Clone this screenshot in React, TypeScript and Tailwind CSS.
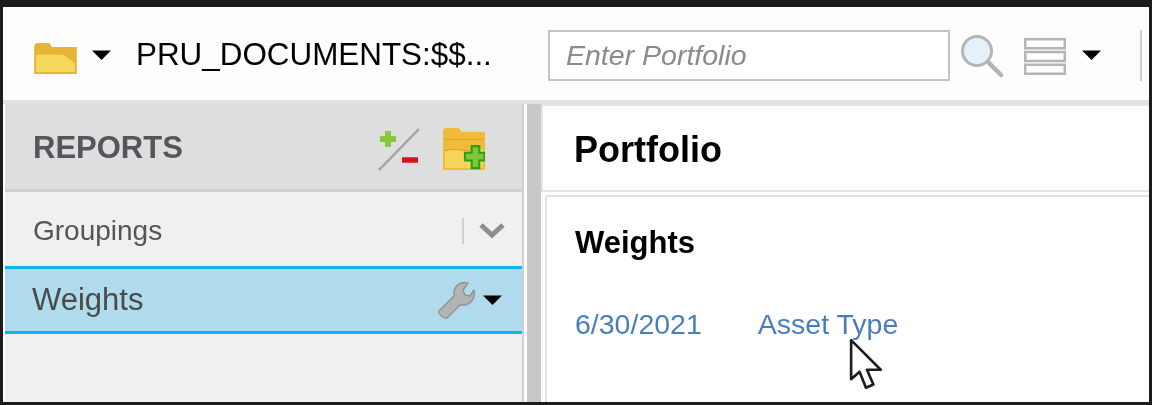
const Caret = ({ className = "" }: { className?: string }) => (
  <svg className={className} width="19" height="10" viewBox="0 0 19 10">
    <path d="M0 0.5H19L9.5 10Z" fill="#000" />
  </svg>
);

const Folder = () => (
  <svg width="43" height="31" viewBox="0 0 44 32">
    <path d="M0 32V4q0-4 4-4h10q3 0 4 4h26v28Z" fill="#e6b535" />
    <path d="M2 12h26q3 0 5 2l9 7v9H2Z" fill="#f5d95c" />
  </svg>
);

const PlusMinus = () => (
  <svg width="44" height="46" viewBox="0 0 44 46">
    <path d="M2 44L42 3" stroke="#a3a3a3" strokeWidth="2.5" />
    <path d="M3 13h16M11 5v16" stroke="#8cc63f" strokeWidth="6" />
    <path d="M25 34h16" stroke="#d9101c" strokeWidth="5.5" />
  </svg>
);

const FolderPlus = () => (
  <svg width="42" height="42" viewBox="0 0 44 44">
    <path d="M0 44V4q0-4 4-4h11q3 0 4 4h25v40Z" fill="#efbb38" />
    <path d="M2 24c10-4 18 0 26 0l14-2v20H2Z" fill="#f7d55a" />
    <path d="M2 12h40M2 24c10-4 18 0 26 0" fill="none" stroke="#dda32c" strokeWidth="1.5" />
    <path d="M30 19v7h-7v8h7v8h8v-8h5.5v-8H38v-7Z" fill="#7cc63c" stroke="#2f9e10" strokeWidth="2.2" />
  </svg>
);

const Search = () => (
  <svg width="44" height="44" viewBox="0 0 44 44">
    <circle cx="17" cy="17" r="14.5" fill="#e4f1f8" stroke="#b5b5b5" strokeWidth="3" />
    <path d="M28 28L41 41" stroke="#b3b3b3" strokeWidth="4.5" strokeLinecap="round" />
  </svg>
);

const ListIcon = () => (
  <svg width="42" height="37" viewBox="0 0 42 37">
    <rect x="1.25" y="1.25" width="39.5" height="9" fill="#fff" stroke="#b5b5b5" strokeWidth="2.5" />
    <rect x="1.25" y="14" width="39.5" height="9" fill="#fff" stroke="#b5b5b5" strokeWidth="2.5" />
    <rect x="1.25" y="26.75" width="39.5" height="9" fill="#fff" stroke="#b5b5b5" strokeWidth="2.5" />
  </svg>
);

const Wrench = () => (
  <svg width="38" height="38" viewBox="0 0 38 38">
    <path
      d="M1 30L16 15C15 6 21 0 30 2L25 9l2 5 5 1 4-6c2 10-5 16-14 15L9 37c-3 1-9-4-8-7Z"
      fill="#b4b4b4"
      stroke="#949494"
      strokeWidth="1.5"
      strokeLinejoin="round"
    />
  </svg>
);

const Chevron = () => (
  <svg width="28" height="18" viewBox="0 0 28 18">
    <path d="M3 3L14 13L25 3" fill="none" stroke="#8e8e8e" strokeWidth="5" />
  </svg>
);

const Cursor = () => (
  <svg className="absolute left-[308px] top-[235px]" width="36" height="53" viewBox="0 0 34 50">
    <path
      d="M2 1V38L10 31L16 46L23 43L17 29H30Z"
      fill="#fff"
      stroke="#1d1d1d"
      strokeWidth="2.5"
      strokeLinejoin="round"
    />
  </svg>
);

export default function App() {
  return (
    <div className="w-[1152px] h-[405px] overflow-hidden bg-[#1c1c1c] pt-[7px] pl-[3px] pr-[3px] pb-[3px] font-['Liberation_Sans',sans-serif]">
      <div className="h-full bg-white flex flex-col blur-[0.4px]">
        <div className="h-[97px] shrink-0 pt-[3px] flex items-center bg-[#fdfdfd] border-b-[4px] border-[#e2e2e2]">
          <div className="ml-[31px] mt-[6px]"><Folder /></div>
          <Caret className="ml-[15px]" />
          <span className="ml-[25px] w-[412px] text-[31.4px] text-black whitespace-nowrap">PRU_DOCUMENTS:$$...</span>
          <div className="w-[402px] h-[51px] border-2 border-[#c4c4c4] bg-white flex items-center pl-[16px] text-[28.5px] italic text-[#8b8b8b]">
            Enter Portfolio
          </div>
          <div className="ml-[10px] mt-[2px]"><Search /></div>
          <div className="ml-[20px] mt-[2px]"><ListIcon /></div>
          <Caret className="ml-[16px]" />
          <div className="ml-[39px] w-[2px] h-[51px] bg-[#cfcfcf]" />
        </div>
        <div className="flex-1 flex min-h-0">
          <div className="w-[2px] shrink-0 bg-white" />
          <div className="w-[519px] shrink-0 bg-[#f0f0f0] border-r-[2px] border-[#d0d0d0] flex flex-col">
            <div className="h-[88px] shrink-0 pt-[4px] bg-[#dedede] border-b-[3px] border-[#cfcfcf] flex items-center pl-[28px] pr-[37px]">
              <span className="flex-1 text-[31px] font-bold text-[#55555c]">REPORTS</span>
              <PlusMinus />
              <div className="ml-[22px]"><FolderPlus /></div>
            </div>
            <div className="h-[74px] shrink-0 pt-[3px] flex items-center pl-[28px] pr-[16px] text-[28px] text-[#555]">
              <span className="flex-1">Groupings</span>
              <div className="w-[2px] h-[26px] bg-[#cfcfcf]" />
              <div className="ml-[14px]"><Chevron /></div>
            </div>
            <div className="h-[68px] shrink-0 bg-[#b0dbec] border-y-[3px] border-[#10b4ec] flex items-center pl-[27px] pr-[20px] text-[31px] text-[#4a4a4a]">
              <span className="flex-1">Weights</span>
              <Wrench />
              <Caret className="ml-[7px]" />
            </div>
          </div>
          <div className="w-[3px] shrink-0 bg-white" />
          <div className="w-[14px] shrink-0 bg-[#c8c8c8]" />
          <div className="relative flex-1 min-w-0 bg-white flex flex-col">
            <div className="h-[88px] shrink-0 pt-[3px] border-y-[2px] border-l-[2px] border-[#e4e4e4] flex items-center pl-[31px] text-[36px] font-bold text-black">
              Portfolio
            </div>
            <div className="flex-1 ml-[4px] mt-[3px] border-l-[2px] border-t-[2px] border-[#e2e2e2] pl-[28px] pt-[28px]">
              <div className="text-[31px] font-bold text-black leading-[36px]">Weights</div>
              <div className="mt-[47px] flex text-[28.5px] text-[#4a7ebb] leading-[32px]">
                <span>6/30/2021</span>
                <span className="ml-[56px]">Asset Type</span>
              </div>
            </div>
            <Cursor />
          </div>
        </div>
      </div>
    </div>
  );
}
